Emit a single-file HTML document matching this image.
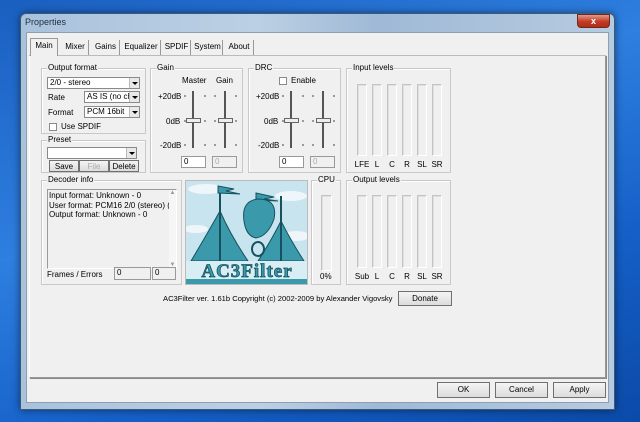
<!DOCTYPE html>
<html><head><meta charset="utf-8"><style>
*{margin:0;padding:0;box-sizing:border-box}
body{width:640px;height:422px;overflow:hidden;position:relative;font-family:"Liberation Sans",sans-serif;font-size:8px;color:#000;
background:linear-gradient(160deg,#1a5fc0 0%,#2e7fe0 40%,#1560c8 70%,#0b4aa8 100%)}
.a{position:absolute}
.win{left:20px;top:13px;width:595px;height:397px;border:1px solid #3b5a7a;border-radius:6px 6px 0 0;
background:linear-gradient(90deg,#a9c2dc 0%,#bcd0e4 40%,#9fb9d6 60%,#b7cbe0 100%);box-shadow:0 0 8px rgba(0,0,0,.5)}
.gb{border:1px solid #c8c8c8;box-shadow:inset 1px 1px 0 #fff}
.gt{position:absolute;top:-6px;left:5px;background:#f0f0f0;padding:0 1px;white-space:nowrap}
.cb{background:#fff;border:1px solid #8a8a8a;white-space:nowrap;overflow:hidden;padding-left:2px;line-height:10px}
.arr{position:absolute;right:0;top:0;width:10px;height:100%;background:#e8e8e8;border-left:1px solid #bbb}
.arr:after{content:"";position:absolute;left:2px;top:4px;border:3px solid transparent;border-top:3px solid #000}
.btn{background:linear-gradient(#f4f4f4,#dcdcdc);border:1px solid #707070;text-align:center;line-height:13px}
.chk{width:8px;height:8px;border:1px solid #8a8a8a;background:#fff}
.bar{border:1px solid #c4c4c4;border-right-color:#fff;border-bottom-color:#fff;box-shadow:inset 1px 1px 0 #e0e0e0}
.tab{top:40px;height:15px;line-height:14px;text-align:center;border-right:1px solid #999}
.ed{background:#fff;border:1px solid #999;padding-left:2px;line-height:10px}
.lb{width:16px;text-align:center}
</style></head><body>
<div class="a win"></div>
<div class="a" style="left:25px;top:17px;color:#1e2f40;font-size:9px">Properties</div>
<div class="a" style="left:577px;top:14px;width:33px;height:14px;border-radius:0 0 4px 4px;background:linear-gradient(#e09a8a,#c43a22 55%,#b02c18);border:1px solid #6b2a20;color:#fff;text-align:center;font-weight:bold;font-size:9px;line-height:12px">x</div>
<div class="a" style="left:26px;top:32px;width:583px;height:371px;background:#f0f0f0;border:1px solid #8e9fb2"></div>
<div class="a" style="left:29px;top:55px;width:577px;height:323px;border:1px solid #999;border-top-color:#fff;border-left-color:#fff;box-shadow:1px 1px 0 #888"></div>
<div class="a" style="left:29px;top:55px;width:577px;height:1px;background:#bbb"></div>
<div class="a tab" style="left:30px;width:28px;top:38px;height:18px;background:#f0f0f0;border:1px solid #999;border-bottom:none">Main</div>
<div class="a tab" style="left:62px;width:27px">Mixer</div>
<div class="a tab" style="left:92px;width:28px">Gains</div>
<div class="a tab" style="left:122px;width:39px">Equalizer</div>
<div class="a tab" style="left:163px;width:28px">SPDIF</div>
<div class="a tab" style="left:193px;width:30px">System</div>
<div class="a tab" style="left:225px;width:29px">About</div>

<div class="a gb" style="left:41px;top:68px;width:105px;height:66px"><span class="gt">Output format</span></div>
<div class="a cb" style="left:47px;top:77px;width:93px;height:12px">2/0 - stereo<div class="arr"></div></div>
<div class="a" style="left:48px;top:93px">Rate</div>
<div class="a cb" style="left:84px;top:91px;width:56px;height:12px">AS IS (no ch<div class="arr"></div></div>
<div class="a" style="left:48px;top:108px">Format</div>
<div class="a cb" style="left:84px;top:106px;width:56px;height:12px">PCM 16bit<div class="arr"></div></div>
<div class="a chk" style="left:49px;top:123px"></div>
<div class="a" style="left:61px;top:122px">Use SPDIF</div>
<div class="a gb" style="left:41px;top:140px;width:105px;height:33px"><span class="gt">Preset</span></div>
<div class="a cb" style="left:47px;top:147px;width:90px;height:12px"><div class="arr"></div></div>
<div class="a btn" style="left:49px;top:160px;width:30px;height:12px;line-height:11px">Save</div>
<div class="a btn" style="left:79px;top:160px;width:30px;height:12px;line-height:11px;color:#aaa">File</div>
<div class="a btn" style="left:109px;top:160px;width:30px;height:12px;line-height:11px">Delete</div>

<div class="a gb" style="left:150px;top:68px;width:93px;height:105px"><span class="gt">Gain</span></div>
<div class="a" style="left:182px;top:76px">Master</div><div class="a" style="left:216px;top:76px">Gain</div>
<div class="a gb" style="left:248px;top:68px;width:93px;height:105px"><span class="gt">DRC</span></div>
<div class="a chk" style="left:279px;top:77px"></div><div class="a" style="left:291px;top:76px">Enable</div>

<div class="a" style="left:158px;top:92px">+20dB</div><div class="a" style="left:166px;top:117px">0dB</div><div class="a" style="left:160px;top:141px">-20dB</div>
<div class="a" style="left:256px;top:92px">+20dB</div><div class="a" style="left:264px;top:117px">0dB</div><div class="a" style="left:258px;top:141px">-20dB</div>
<svg class="a" style="left:0;top:0" width="640" height="422">
<g stroke="#444" stroke-width="1">
<path d="M184 96h2M204 96h2M214 96h2M235 96h2M184 121h2M204 121h2M214 121h2M235 121h2M184 145h2M204 145h2M214 145h2M235 145h2"/>
<path d="M282 96h2M302 96h2M312 96h2M333 96h2M282 121h2M302 121h2M312 121h2M333 121h2M282 145h2M302 145h2M312 145h2M333 145h2"/>
</g>
<g fill="#555"><rect x="192" y="91" width="2" height="57"/><rect x="224" y="91" width="2" height="57"/><rect x="290" y="91" width="2" height="57"/><rect x="322" y="91" width="2" height="57"/></g>
<g fill="#eee" stroke="#666"><rect x="186.5" y="118.5" width="14" height="4"/><rect x="218.5" y="118.5" width="14" height="4"/><rect x="284.5" y="118.5" width="14" height="4"/><rect x="316.5" y="118.5" width="14" height="4"/></g>
</svg>
<div class="a ed" style="left:181px;top:156px;width:25px;height:12px">0</div>
<div class="a ed" style="left:212px;top:156px;width:25px;height:12px;color:#aaa;background:#f0f0f0">0</div>
<div class="a ed" style="left:279px;top:156px;width:25px;height:12px">0</div>
<div class="a ed" style="left:310px;top:156px;width:25px;height:12px;color:#aaa;background:#f0f0f0">0</div>

<div class="a gb" style="left:346px;top:68px;width:105px;height:105px"><span class="gt">Input levels</span></div>
<div class="a bar" style="left:357px;top:84px;width:10px;height:72px"></div>
<div class="a bar" style="left:372px;top:84px;width:10px;height:72px"></div>
<div class="a bar" style="left:387px;top:84px;width:10px;height:72px"></div>
<div class="a bar" style="left:402px;top:84px;width:10px;height:72px"></div>
<div class="a bar" style="left:417px;top:84px;width:10px;height:72px"></div>
<div class="a bar" style="left:432px;top:84px;width:10px;height:72px"></div>
<div class="a lb" style="left:354px;top:160px">LFE</div><div class="a lb" style="left:369px;top:160px">L</div><div class="a lb" style="left:384px;top:160px">C</div><div class="a lb" style="left:399px;top:160px">R</div><div class="a lb" style="left:414px;top:160px">SL</div><div class="a lb" style="left:429px;top:160px">SR</div>

<div class="a gb" style="left:41px;top:180px;width:141px;height:105px"><span class="gt">Decoder info</span></div>
<div class="a" style="left:47px;top:189px;width:130px;height:80px;background:#f0f0f0;border:1px solid #999;border-right-color:#fff;border-bottom-color:#fff;padding:1px;line-height:9.5px;white-space:nowrap;overflow:hidden">Input format: Unknown - 0<br>User format: PCM16 2/0 (stereo) (<br>Output format: Unknown - 0</div>
<div class="a" style="left:169px;top:190px;width:7px;height:78px;background:#f6f6f6;color:#999;font-size:6px;text-align:center">▲<div style="position:absolute;bottom:0;width:7px">▼</div></div>
<div class="a" style="left:47px;top:270px">Frames / Errors</div>
<div class="a ed" style="left:114px;top:267px;width:37px;height:13px;background:#f0f0f0">0</div>
<div class="a ed" style="left:152px;top:267px;width:24px;height:13px;background:#f0f0f0">0</div>

<svg class="a" style="left:185px;top:180px;border:1px solid #bbb" width="123" height="105">
<rect width="123" height="105" fill="#c8e4ef"/>
<g fill="#eef6fa"><ellipse cx="20" cy="8" rx="18" ry="5"/><ellipse cx="105" cy="15" rx="16" ry="5"/><ellipse cx="10" cy="48" rx="12" ry="4"/><ellipse cx="110" cy="55" rx="14" ry="5"/><ellipse cx="60" cy="85" rx="25" ry="4"/><ellipse cx="30" cy="70" rx="14" ry="4"/></g>
<g fill="#3a9aab" stroke="#16525e" stroke-width="1">
<path d="M32 5 L48 8 L40 10 L54 13 L32 12Z"/><path d="M70 12 L88 16 L78 18 L92 20 L70 19Z"/>
<path d="M34 12 L34 30 Q20 55 5 80 L62 80 Q45 55 34 30Z"/>
<path d="M95 15 L95 40 Q85 60 72 80 L118 80 Q105 60 95 40Z"/>
<path d="M58 40 Q55 20 72 18 Q92 18 88 38 Q82 55 70 57 Q60 55 58 40Z"/>
<ellipse cx="72" cy="68" rx="6" ry="7" fill="none" stroke-width="2"/>
</g>
<path d="M34 12V80M95 15V80" stroke="#16525e" stroke-width="2"/>
<rect x="0" y="80" width="123" height="18" fill="#d8eef4"/>
<text x="61" y="96" text-anchor="middle" font-family="Liberation Serif" font-size="19" font-weight="bold" fill="#3a9aab" stroke="#16525e" stroke-width="0.8" letter-spacing="1">AC3Filter</text>
<rect x="0" y="98" width="123" height="7" fill="#3a9aab"/>
</svg>

<div class="a gb" style="left:311px;top:180px;width:30px;height:105px"><span class="gt">CPU</span></div>
<div class="a bar" style="left:321px;top:195px;width:11px;height:76px"></div>
<div class="a" style="left:320px;top:272px">0%</div>

<div class="a gb" style="left:346px;top:180px;width:105px;height:105px"><span class="gt">Output levels</span></div>
<div class="a bar" style="left:357px;top:195px;width:10px;height:73px"></div>
<div class="a bar" style="left:372px;top:195px;width:10px;height:73px"></div>
<div class="a bar" style="left:387px;top:195px;width:10px;height:73px"></div>
<div class="a bar" style="left:402px;top:195px;width:10px;height:73px"></div>
<div class="a bar" style="left:417px;top:195px;width:10px;height:73px"></div>
<div class="a bar" style="left:432px;top:195px;width:10px;height:73px"></div>
<div class="a lb" style="left:354px;top:272px">Sub</div><div class="a lb" style="left:369px;top:272px">L</div><div class="a lb" style="left:384px;top:272px">C</div><div class="a lb" style="left:399px;top:272px">R</div><div class="a lb" style="left:414px;top:272px">SL</div><div class="a lb" style="left:429px;top:272px">SR</div>

<div class="a" style="left:163px;top:294px;white-space:nowrap;font-size:7.6px">AC3Filter ver. 1.61b Copyright (c) 2002-2009 by Alexander Vigovsky</div>
<div class="a btn" style="left:398px;top:291px;width:54px;height:15px">Donate</div>

<div class="a btn" style="left:437px;top:382px;width:53px;height:16px">OK</div>
<div class="a btn" style="left:495px;top:382px;width:53px;height:16px">Cancel</div>
<div class="a btn" style="left:553px;top:382px;width:53px;height:16px">Apply</div>
</body></html>
